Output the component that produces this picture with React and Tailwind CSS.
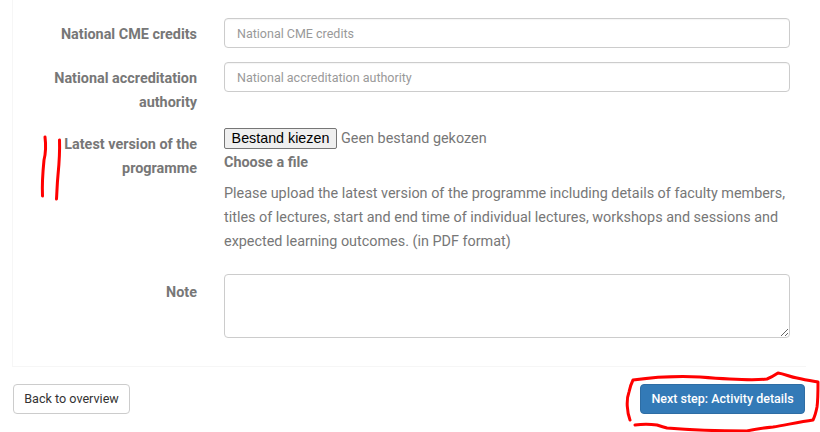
import React from "react";

const inputClass =
  "w-full h-[30px] bg-white border border-[#ccc] rounded-[4px] px-3 text-[12.5px] text-[#555] placeholder:text-[#999] shadow-[inset_0_1px_1px_rgba(0,0,0,0.04)]";

const Row = ({ label, labelClass = "pt-[5px]", children }) => (
  <div className="flex">
    <label className={`w-[184px] shrink-0 text-right font-bold text-[14.4px] leading-[24px] text-[#777] ${labelClass}`}>
      {label}
    </label>
    <div className="w-[566px] ml-[27px]">{children}</div>
  </div>
);

const App = () => {
  return (
    <div className="relative w-[820px] h-[432px] overflow-hidden bg-white font-['Roboto',sans-serif]">
      {/* form panel */}
      <div className="ml-[12px] w-[794px] h-[367px] border-l border-b border-[#f6f6f6] pt-[18px]">
        <Row label="National CME credits">
          <input className={inputClass} placeholder="National CME credits" />
        </Row>
        <div className="mt-[14px]">
          <Row label={<>National accreditation<br />authority</>}>
            <input className={inputClass} placeholder="National accreditation authority" />
          </Row>
        </div>
        <div className="mt-[13px]">
          <Row label={<>Latest version of the<br />programme</>}>
            <div className="flex items-center h-[21px]">
              <span className="w-[113px] h-[21px] flex items-center justify-center bg-[#efefef] border border-[#767676] rounded-[2px] text-[14.3px] text-black font-['Liberation_Sans',sans-serif]">
                Bestand kiezen
              </span>
              <span className="ml-[4px] text-[14.4px] text-[#777]">Geen bestand gekozen</span>
            </div>
            <p className="mt-[2px] font-bold text-[14.4px] leading-[24px] text-[#777]">Choose a file</p>
            <p className="mt-[7px] text-[14.4px] leading-[24px] text-[#777] whitespace-nowrap">
              Please upload the latest version of the programme including details of faculty members,
              <br />
              titles of lectures, start and end time of individual lectures, workshops and sessions and
              <br />
              expected learning outcomes. (in PDF format)
            </p>
          </Row>
        </div>
        <div className="mt-[20px]">
          <Row label="Note" labelClass="pt-[7px]">
            <textarea className="block w-full h-[64px] bg-white border border-[#ccc] rounded-[4px] px-3 py-1" />
          </Row>
        </div>
      </div>

      {/* footer buttons */}
      <div className="flex justify-between ml-[13px] w-[792px] mt-[17px]">
        <button className="h-[30px] w-[117px] bg-white border border-[#ccc] rounded-[4px] text-[12.6px] text-[#333]">
          Back to overview
        </button>
        <button className="h-[30px] w-[165px] bg-[#337ab7] border border-[#2e6da4] rounded-[4px] text-[12.5px] font-medium text-white">
          Next step: Activity details
        </button>
      </div>

      {/* red marker annotations */}
      <svg className="absolute left-0 top-0" width="820" height="432" fill="none" stroke="#f00" strokeWidth="3" strokeLinecap="round" strokeLinejoin="round">
        <path d="M45 137 C46 145 46 152 44 160 C43 170 42 185 42.5 196" />
        <path d="M59.5 140 C60 155 59 165 58 175 C57 185 57 192 56.5 199" />
        <path d="M630 420 C627 412 626 400 629 392 C630 387 631 384 633 380 C655 377 680 376 700 377 C725 379 750 381 767 379 C772 377 775 375 778 373 C785 374 790 377 797 378 C805 380 812 381 818 382 C818 392 818 400 817 407 C816 412 815 416 813 420 C800 422 785 425 773 427 C763 428 755 429 747 431 C720 431 690 430 667 428 C663 427 660 426 657 425 C650 424 642 424 635 425" />
      </svg>
    </div>
  );
};

export default App;
